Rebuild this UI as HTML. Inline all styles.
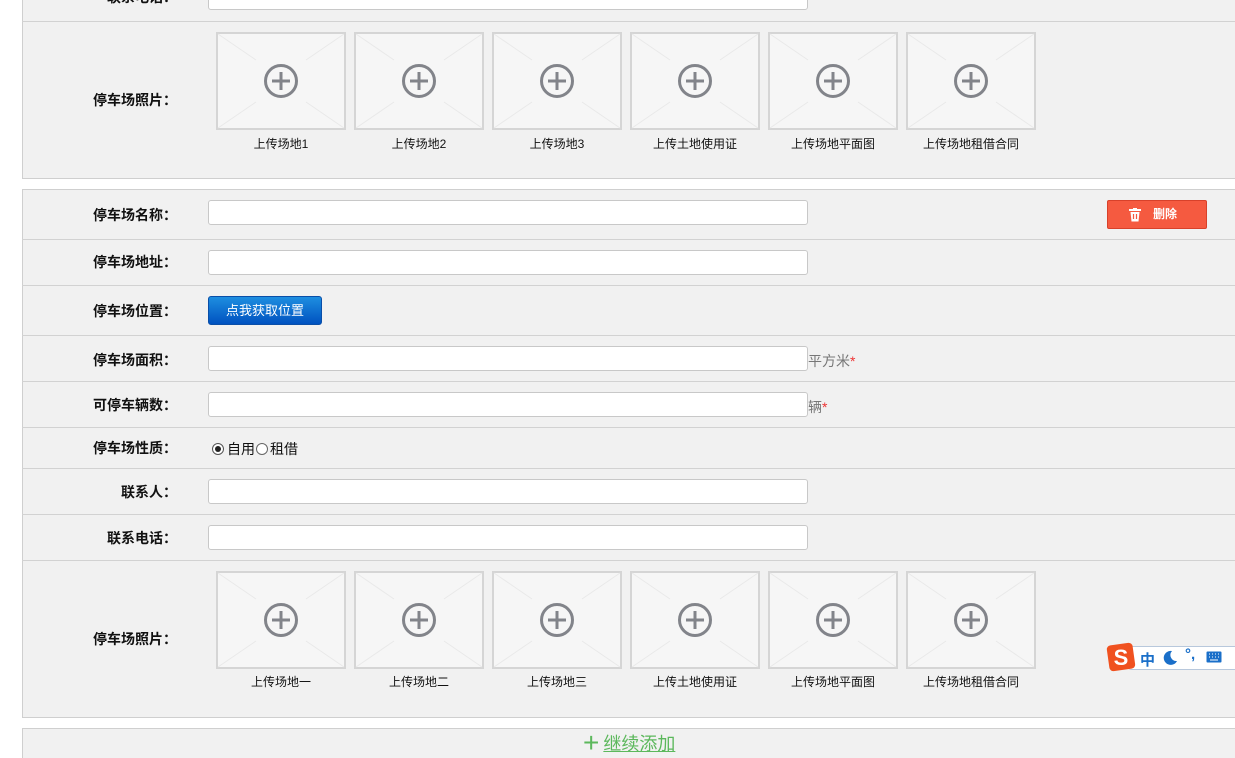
<!DOCTYPE html>
<html><head><meta charset="utf-8">
<style>
*{margin:0;padding:0;box-sizing:border-box}
html,body{width:1235px;height:758px;overflow:hidden}
body{background:#fff;position:relative;font-family:"Liberation Sans","Noto Sans CJK SC",sans-serif;}
.panel{position:absolute;left:22px;width:1230px;background:#f1f1f1;border:1px solid #cfcfcf;}
.hl{position:absolute;left:22px;width:1213px;height:1px;background:#d2d2d2}
.lbl{position:absolute;width:155px;left:22px;text-align:right;font-size:14px;font-weight:bold;color:#111;line-height:16px}
.inp{position:absolute;left:208px;width:600px;height:25px;background:#fff;border:1px solid #c8c8c8;border-radius:3px}
.box{position:absolute;width:130px;height:98px}
.cap{position:absolute;width:130px;text-align:center;font-size:12px;color:#111;line-height:14px}
.unit{position:absolute;font-size:14px;color:#777}
.unit b{color:#e33;font-weight:normal}
</style></head><body>
<svg width="0" height="0" style="position:absolute"><defs>
<g id="ph"><rect x="1" y="1" width="128" height="96" fill="#f6f6f6" stroke="#d5d5d5" stroke-width="2"/>
<path d="M2 2L40 28M128 2L90 28M2 96L40 70M128 96L90 70" stroke="#e9e9e9" stroke-width="1"/>
<circle cx="65" cy="49" r="15.5" fill="none" stroke="#82848a" stroke-width="3"/>
<path d="M65 40V58M56 49H74" stroke="#82848a" stroke-width="3"/></g>
</defs></svg>

<div class="panel" style="top:-40px;height:219px"></div>
<div class="lbl" style="top:-11px">联系电话：</div>
<div class="inp" style="top:-15px"></div>
<div class="hl" style="top:21px"></div>
<div class="lbl" style="top:92px">停车场照片：</div>

<div class="panel" style="top:189px;height:529px"></div>
<div class="lbl" style="top:207px">停车场名称：</div>
<div class="inp" style="top:200px"></div>
<div style="position:absolute;left:1107px;top:200px;width:100px;height:29px;background:#f55a40;border:1px solid #d8412a;border-radius:2px;color:#fff;font-size:12px;font-weight:bold;line-height:27px">
<svg style="position:absolute;left:20px;top:7px" width="14" height="14" viewBox="0 0 14 14"><rect x="1" y="1" width="12" height="2" fill="#fff"/><rect x="5" y="0" width="4" height="2" fill="#fff"/><path d="M2.5 4h9l-1 9.5h-7z" fill="#fff"/><path d="M5.5 6v5M8.5 6v5" stroke="#f55a40" stroke-width="1.2"/></svg>
<span style="position:absolute;left:45px">删除</span></div>
<div class="hl" style="top:239px"></div>
<div class="lbl" style="top:254px">停车场地址：</div>
<div class="inp" style="top:250px"></div>
<div class="hl" style="top:285px"></div>
<div class="lbl" style="top:303px">停车场位置：</div>
<div style="position:absolute;left:208px;top:296px;width:114px;height:29px;border-radius:3px;background:linear-gradient(#1e8ee0,#0052c0);border:1px solid #0a4fa8;color:#fff;font-size:13px;text-align:center;line-height:27px">点我获取位置</div>
<div class="hl" style="top:335px"></div>
<div class="lbl" style="top:352px">停车场面积：</div>
<div class="inp" style="top:346px"></div>
<div class="unit" style="left:808px;top:351px">平方米<b>*</b></div>
<div class="hl" style="top:381px"></div>
<div class="lbl" style="top:397px">可停车辆数：</div>
<div class="inp" style="top:392px"></div>
<div class="unit" style="left:808px;top:397px">辆<b>*</b></div>
<div class="hl" style="top:427px"></div>
<div class="lbl" style="top:440px">停车场性质：</div>
<div style="position:absolute;left:211px;top:440px;font-size:14px;color:#111;line-height:18px;display:flex;align-items:center">
<svg width="14" height="14"><circle cx="7" cy="7" r="5.5" fill="#fff" stroke="#555"/><circle cx="7" cy="7" r="3" fill="#222"/></svg><span style="margin-left:2px">自用</span>
<svg width="14" height="14" style="margin-left:0"><circle cx="7" cy="7" r="5.5" fill="#fff" stroke="#666"/></svg><span style="margin-left:1px">租借</span></div>
<div class="hl" style="top:468px"></div>
<div class="lbl" style="top:484px">联系人：</div>
<div class="inp" style="top:479px"></div>
<div class="hl" style="top:514px"></div>
<div class="lbl" style="top:530px">联系电话：</div>
<div class="inp" style="top:525px"></div>
<div class="hl" style="top:560px"></div>
<div class="lbl" style="top:631px">停车场照片：</div>

<svg class="box" style="left:216px;top:32px"><use href="#ph"/></svg>
<svg class="box" style="left:354px;top:32px"><use href="#ph"/></svg>
<svg class="box" style="left:492px;top:32px"><use href="#ph"/></svg>
<svg class="box" style="left:630px;top:32px"><use href="#ph"/></svg>
<svg class="box" style="left:768px;top:32px"><use href="#ph"/></svg>
<svg class="box" style="left:906px;top:32px"><use href="#ph"/></svg>
<div class="cap" style="left:216px;top:137px">上传场地1</div>
<div class="cap" style="left:354px;top:137px">上传场地2</div>
<div class="cap" style="left:492px;top:137px">上传场地3</div>
<div class="cap" style="left:630px;top:137px">上传土地使用证</div>
<div class="cap" style="left:768px;top:137px">上传场地平面图</div>
<div class="cap" style="left:906px;top:137px">上传场地租借合同</div>

<svg class="box" style="left:216px;top:571px"><use href="#ph"/></svg>
<svg class="box" style="left:354px;top:571px"><use href="#ph"/></svg>
<svg class="box" style="left:492px;top:571px"><use href="#ph"/></svg>
<svg class="box" style="left:630px;top:571px"><use href="#ph"/></svg>
<svg class="box" style="left:768px;top:571px"><use href="#ph"/></svg>
<svg class="box" style="left:906px;top:571px"><use href="#ph"/></svg>
<div class="cap" style="left:216px;top:675px">上传场地一</div>
<div class="cap" style="left:354px;top:675px">上传场地二</div>
<div class="cap" style="left:492px;top:675px">上传场地三</div>
<div class="cap" style="left:630px;top:675px">上传土地使用证</div>
<div class="cap" style="left:768px;top:675px">上传场地平面图</div>
<div class="cap" style="left:906px;top:675px">上传场地租借合同</div>

<div style="position:absolute;left:1128px;top:646px;width:120px;height:24px;background:#fff;border:1px solid #b8c8dc;border-radius:3px"></div>
<svg style="position:absolute;left:1106px;top:642px" width="30" height="30" viewBox="0 0 30 30"><rect x="2" y="2" width="26" height="26" rx="4" fill="#f0511f" transform="rotate(-8 15 15)"/><text x="15" y="23" font-size="22" font-weight="bold" fill="#fff" text-anchor="middle" font-family="Liberation Sans">S</text></svg>
<div style="position:absolute;left:1140px;top:649px;font-size:15px;font-weight:bold;color:#1a6fc9">中</div>
<svg style="position:absolute;left:1162px;top:650px" width="16" height="16"><path d="M10 1a7 7 0 1 0 5 10a6 6 0 0 1 -5 -10z" fill="#1a6fc9"/></svg>
<div style="position:absolute;left:1185px;top:646px;font-size:15px;font-weight:bold;color:#1a6fc9">°,</div>
<svg style="position:absolute;left:1206px;top:651px" width="16" height="12"><rect x="0.5" y="0.5" width="15" height="11" fill="#1a6fc9" rx="1"/><path d="M3 3h1M6 3h1M9 3h1M12 3h1M3 6h1M6 6h1M9 6h1M12 6h1M4 9h8" stroke="#fff"/></svg>

<div class="panel" style="top:728px;height:60px"></div>
<div style="position:absolute;left:583px;top:731px;font-size:18px;color:#5cb85c;line-height:24px"><span style="font-size:28px;vertical-align:-2px">+</span><span style="text-decoration:underline;margin-left:4px">继续添加</span></div>
</body></html>
